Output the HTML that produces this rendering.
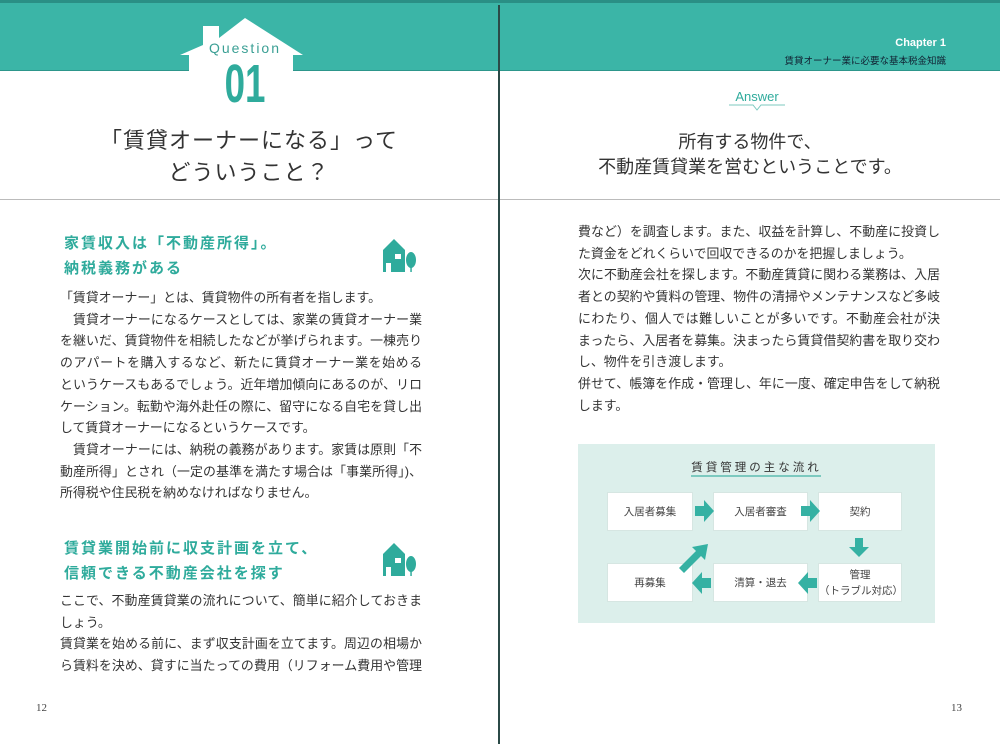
<!DOCTYPE html>
<html><head><meta charset="utf-8"><style>
*{margin:0;padding:0;box-sizing:border-box}
body{width:1000px;height:744px;position:relative;background:#fff;overflow:hidden;font-family:"Liberation Sans","Noto Sans CJK JP",sans-serif;color:#333}
.band{position:absolute;top:0;left:0;width:1000px;height:71px;background:#3bb5a7;border-top:3px solid #2a8f85}
.band:after{content:"";position:absolute;left:0;right:0;bottom:0;height:1px;background:#2d968b}
.spine{position:absolute;left:498px;top:5px;width:2px;height:739px;background:#2b4a47}
.hr{position:absolute;top:199px;height:1px;background:#bbb}
.t{position:absolute;font-size:12.9px;line-height:21.7px}
.t div{text-align:justify;text-align-last:justify;white-space:nowrap}
.t div.l{text-align-last:left}
.h{position:absolute;color:#2fab9c;font-size:15px;line-height:25px;letter-spacing:2px;font-weight:bold}
.box{position:absolute;background:#fff;border:1px solid #d6e6e2;font-size:10.5px;display:flex;align-items:center;justify-content:center;text-align:center;line-height:16px;color:#444}
.pn{position:absolute;top:702px;font-family:"Liberation Serif",serif;font-size:11px;color:#444}
</style></head><body>
<div class="band"></div>
<div class="spine"></div>
<div class="hr" style="left:0;width:498px"></div>
<div class="hr" style="left:500px;width:500px"></div>

<svg style="position:absolute;left:177px;top:15px" width="130" height="60" viewBox="0 0 130 60">
<path d="M3 40 L26 30 L26 11 L42 11 L42 23 L68 3 L126 40 L116 40 L116 60 L12 60 L12 40 Z" fill="#fff"/>
</svg>
<div style="position:absolute;left:200px;top:40px;width:90px;text-align:center;font-size:14px;letter-spacing:2px;color:#3a9f94">Question</div>
<div style="position:absolute;left:190px;top:56px;width:110px;text-align:center;font-size:54px;line-height:56px;color:#2fab9c;font-weight:bold;transform:scaleX(0.68)">01</div>

<div style="position:absolute;left:0;width:498px;top:125px;text-align:center;font-size:22px;line-height:32px;color:#333;letter-spacing:1px">「賃貸オーナーになる」って<br>どういうこと？</div>

<div style="position:absolute;right:54px;top:37px;text-align:right;color:#fff;font-size:11px;font-weight:bold">Chapter 1</div>
<div style="position:absolute;right:54px;top:53px;text-align:right;color:#123;font-size:9.5px">賃貸オーナー業に必要な基本税金知識</div>

<div style="position:absolute;left:727px;top:89px;width:60px;text-align:center;color:#2fab9c;font-size:13px">Answer</div>
<svg style="position:absolute;left:727px;top:104px" width="60" height="8"><path d="M2 1 L26 1 L30 6 L34 1 L58 1" stroke="#7cc9bf" stroke-width="1" fill="none"/></svg>
<div style="position:absolute;left:500px;width:500px;top:130px;text-align:center;font-size:18px;line-height:25px">所有する物件で、<br>不動産賃貸業を営むということです。</div>

<div class="h" style="left:64px;top:231px">家賃収入は「不動産所得」。<br>納税義務がある</div>
<div class="h" style="left:64px;top:536px">賃貸業開始前に収支計画を立て、<br>信頼できる不動産会社を探す</div>

<svg style="position:absolute;left:381px;top:236px" width="38" height="36" viewBox="0 0 38 36">
<path d="M2 14 L13 3 L24 14 L24 36 L2 36 Z" fill="#2fab9c"/>
<rect x="14" y="18" width="6" height="5" fill="#fff"/><rect x="5" y="27" width="5" height="9" fill="#fff"/>
<ellipse cx="30" cy="24" rx="5" ry="8" fill="#2fab9c"/><rect x="29.3" y="28" width="1.5" height="8" fill="#2fab9c"/>
</svg>
<svg style="position:absolute;left:381px;top:540px" width="38" height="36" viewBox="0 0 38 36">
<path d="M2 14 L13 3 L24 14 L24 36 L2 36 Z" fill="#2fab9c"/>
<rect x="14" y="18" width="6" height="5" fill="#fff"/><rect x="5" y="27" width="5" height="9" fill="#fff"/>
<ellipse cx="30" cy="24" rx="5" ry="8" fill="#2fab9c"/><rect x="29.3" y="28" width="1.5" height="8" fill="#2fab9c"/>
</svg>

<div class="t" style="left:60px;top:287px;width:362px">
<div class="l">「賃貸オーナー」とは、賃貸物件の所有者を指します。</div>
<div>　賃貸オーナーになるケースとしては、家業の賃貸オーナー業</div>
<div>を継いだ、賃貸物件を相続したなどが挙げられます。一棟売り</div>
<div>のアパートを購入するなど、新たに賃貸オーナー業を始める</div>
<div>というケースもあるでしょう。近年増加傾向にあるのが、リロ</div>
<div>ケーション。転勤や海外赴任の際に、留守になる自宅を貸し出</div>
<div class="l">して賃貸オーナーになるというケースです。</div>
<div>　賃貸オーナーには、納税の義務があります。家賃は原則「不</div>
<div>動産所得」とされ（一定の基準を満たす場合は「事業所得」)、</div>
<div class="l">所得税や住民税を納めなければなりません。</div>
</div>
<div class="t" style="left:60px;top:590px;width:362px">
<div>ここで、不動産賃貸業の流れについて、簡単に紹介しておきま</div>
<div class="l">しょう。</div>
<div>賃貸業を始める前に、まず収支計画を立てます。周辺の相場か</div>
<div>ら賃料を決め、貸すに当たっての費用（リフォーム費用や管理</div>
</div>

<div class="t" style="left:578px;top:221px;width:362px">
<div>費など）を調査します。また、収益を計算し、不動産に投資し</div>
<div class="l">た資金をどれくらいで回収できるのかを把握しましょう。</div>
<div>次に不動産会社を探します。不動産賃貸に関わる業務は、入居</div>
<div>者との契約や賃料の管理、物件の清掃やメンテナンスなど多岐</div>
<div>にわたり、個人では難しいことが多いです。不動産会社が決</div>
<div>まったら、入居者を募集。決まったら賃貸借契約書を取り交わ</div>
<div class="l">し、物件を引き渡します。</div>
<div>併せて、帳簿を作成・管理し、年に一度、確定申告をして納税</div>
<div class="l">します。</div>
</div>

<div style="position:absolute;left:578px;top:444px;width:357px;height:179px;background:#dcefeb"></div>
<div style="position:absolute;left:578px;top:459px;width:357px;text-align:center;font-size:11.5px;letter-spacing:3px;color:#333">賃貸管理の主な流れ</div>
<div style="position:absolute;left:691px;top:475px;width:130px;height:2px;background:#7cc9bf"></div>
<div class="box" style="left:607px;top:492px;width:86px;height:39px">入居者募集</div>
<div class="box" style="left:713px;top:492px;width:95px;height:39px">入居者審査</div>
<div class="box" style="left:818px;top:492px;width:84px;height:39px">契約</div>
<div class="box" style="left:607px;top:563px;width:86px;height:39px">再募集</div>
<div class="box" style="left:713px;top:563px;width:95px;height:39px">清算・退去</div>
<div class="box" style="left:818px;top:563px;width:84px;height:39px">管理<br>（トラブル対応）</div>
<svg style="position:absolute;left:578px;top:444px" width="357" height="179">
<g fill="#35b1a3">
<path d="M117 62 L126 62 L126 56 L136 67 L126 78 L126 72 L117 72 Z"/>
<path d="M223 62 L232 62 L232 56 L242 67 L232 78 L232 72 L223 72 Z"/>
<path d="M277 94 L285 94 L285 103 L291 103 L281 113 L271 103 L277 103 Z"/>
<path d="M239 134 L230 134 L230 128 L220 139 L230 150 L230 144 L239 144 Z"/>
<path d="M133 134 L124 134 L124 128 L114 139 L124 150 L124 144 L133 144 Z"/>
<path d="M101 124 L118 107 L114 103 L130 100 L127 116 L123 112 L106 129 Z"/>
</g></svg>

<div class="pn" style="left:36px">12</div>
<div class="pn" style="left:951px">13</div>
</body></html>
